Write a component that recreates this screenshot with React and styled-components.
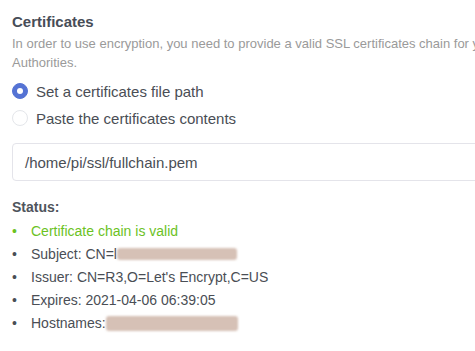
import React from 'react';
import styled, { createGlobalStyle } from 'styled-components';

const GlobalStyle = createGlobalStyle`
    html, body {
        margin: 0;
        padding: 0;
        background: #ffffff;
        overflow: hidden;
    }
    body {
        font-family: "Liberation Sans", Arial, sans-serif;
    }
`;

const Root = styled.div`
    width: 640px;
    padding: 12px 12px 0 12px;
`;

const Title = styled.div`
    font-size: 15px;
    line-height: 20px;
    font-weight: bold;
    color: #474d57;
`;

const Description = styled.div`
    margin-top: 2px;
    font-size: 13px;
    line-height: 19px;
    color: #9a9a9a;
    white-space: nowrap;
`;

const RadioGroup = styled.div`
    margin-top: 7px;
    display: flex;
    flex-direction: column;
    gap: 3px;
`;

const RadioRow = styled.label`
    display: flex;
    align-items: center;
    gap: 8px;
    height: 24px;
    font-size: 15px;
    color: #4a4e55;
`;

const RadioDot = styled.span`
    width: 16px;
    height: 16px;
    border-radius: 50%;
    box-sizing: border-box;
    display: flex;
    align-items: center;
    justify-content: center;
    background: ${({ checked }) => (checked ? '#5573d4' : '#ffffff')};
    border: 1px solid ${({ checked }) => (checked ? '#5573d4' : '#e4e6ea')};

    &::after {
        content: '';
        display: ${({ checked }) => (checked ? 'block' : 'none')};
        width: 6px;
        height: 6px;
        border-radius: 50%;
        background: #ffffff;
    }
`;

const PathInput = styled.div`
    margin-top: 13px;
    box-sizing: border-box;
    height: 38px;
    display: flex;
    align-items: center;
    padding: 0 12px;
    border: 1px solid #e4e4ea;
    border-radius: 4px;
    font-size: 15px;
    color: #4a4e55;
`;

const StatusLabel = styled.div`
    margin-top: 17px;
    font-size: 14px;
    line-height: 19px;
    font-weight: bold;
    color: #4f545c;
`;

const StatusList = styled.ul`
    list-style: none;
    margin: 2px 0 0 0;
    padding: 0;
`;

const StatusItem = styled.li`
    display: flex;
    align-items: center;
    height: 23px;
    font-size: 14px;
    color: ${({ ok }) => (ok ? '#6cc21f' : '#4a4e55')};

    &::before {
        content: '•';
        width: 19px;
        flex: none;
        color: ${({ ok }) => (ok ? '#6cc21f' : '#4a4e55')};
    }
`;

const Redacted = styled.span`
    display: inline-block;
    width: ${({ w }) => w}px;
    height: ${({ h }) => h}px;
    margin-top: ${({ dy }) => dy || 0}px;
    background: #d6c1b6;
    border-radius: 3px;
    filter: blur(1.2px);
`;

export default function App() {
    return (
        <>
            <GlobalStyle />
            <Root>
                <Title>Certificates</Title>
                <Description>
                    In order to use encryption, you need to provide a valid SSL certificates chain for your domain signed by one of the trusted Certificate
                    <br />
                    Authorities.
                </Description>
                <RadioGroup>
                    <RadioRow>
                        <RadioDot checked />
                        Set a certificates file path
                    </RadioRow>
                    <RadioRow>
                        <RadioDot />
                        Paste the certificates contents
                    </RadioRow>
                </RadioGroup>
                <PathInput>/home/pi/ssl/fullchain.pem</PathInput>
                <StatusLabel>Status:</StatusLabel>
                <StatusList>
                    <StatusItem ok>Certificate chain is valid</StatusItem>
                    <StatusItem>
                        Subject: CN=l
                        <Redacted w={120} h={12} />
                    </StatusItem>
                    <StatusItem>Issuer: CN=R3,O=Let's Encrypt,C=US</StatusItem>
                    <StatusItem>Expires: 2021-04-06 06:39:05</StatusItem>
                    <StatusItem>
                        Hostnames:
                        <Redacted w={132} h={15} dy={2} />
                    </StatusItem>
                </StatusList>
            </Root>
        </>
    );
}
